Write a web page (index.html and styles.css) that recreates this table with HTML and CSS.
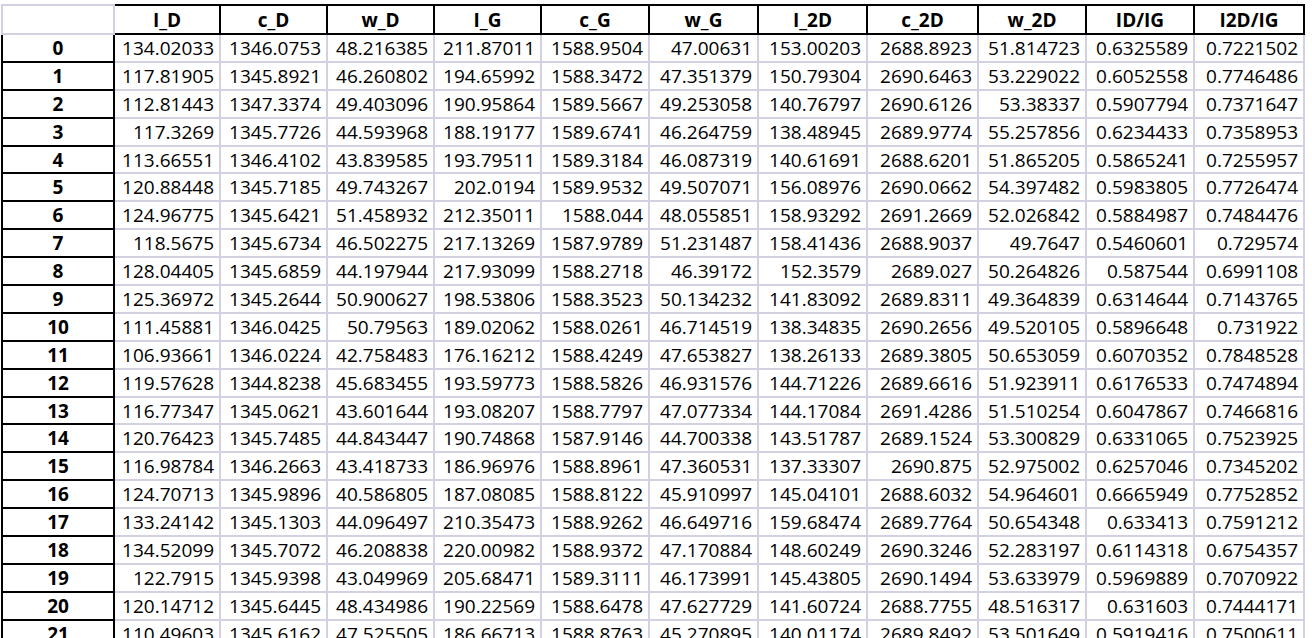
FILE: index.html
```html
<!DOCTYPE html>
<html>
<head>
<meta charset="utf-8">
<title>Data</title>
<link rel="stylesheet" href="styles.css">
</head>
<body>
<div class="sheet">
<table class="grid">
<colgroup>
<col class="c-idx"><col class="c1"><col class="c2"><col class="c3"><col class="c4"><col class="c5"><col class="c6"><col class="c7"><col class="c8"><col class="c9"><col class="c10"><col class="c11">
</colgroup>
<thead>
<tr class="head"><th class="corner"></th><th>I_D</th><th>c_D</th><th>w_D</th><th>I_G</th><th>c_G</th><th>w_G</th><th>I_2D</th><th>c_2D</th><th>w_2D</th><th>ID/IG</th><th>I2D/IG</th></tr>
</thead>
<tbody>
<tr><th class="idx">0</th><td>134.02033</td><td>1346.0753</td><td>48.216385</td><td>211.87011</td><td>1588.9504</td><td>47.00631</td><td>153.00203</td><td>2688.8923</td><td>51.814723</td><td>0.6325589</td><td>0.7221502</td></tr>
<tr><th class="idx">1</th><td>117.81905</td><td>1345.8921</td><td>46.260802</td><td>194.65992</td><td>1588.3472</td><td>47.351379</td><td>150.79304</td><td>2690.6463</td><td>53.229022</td><td>0.6052558</td><td>0.7746486</td></tr>
<tr><th class="idx">2</th><td>112.81443</td><td>1347.3374</td><td>49.403096</td><td>190.95864</td><td>1589.5667</td><td>49.253058</td><td>140.76797</td><td>2690.6126</td><td>53.38337</td><td>0.5907794</td><td>0.7371647</td></tr>
<tr><th class="idx">3</th><td>117.3269</td><td>1345.7726</td><td>44.593968</td><td>188.19177</td><td>1589.6741</td><td>46.264759</td><td>138.48945</td><td>2689.9774</td><td>55.257856</td><td>0.6234433</td><td>0.7358953</td></tr>
<tr><th class="idx">4</th><td>113.66551</td><td>1346.4102</td><td>43.839585</td><td>193.79511</td><td>1589.3184</td><td>46.087319</td><td>140.61691</td><td>2688.6201</td><td>51.865205</td><td>0.5865241</td><td>0.7255957</td></tr>
<tr><th class="idx">5</th><td>120.88448</td><td>1345.7185</td><td>49.743267</td><td>202.0194</td><td>1589.9532</td><td>49.507071</td><td>156.08976</td><td>2690.0662</td><td>54.397482</td><td>0.5983805</td><td>0.7726474</td></tr>
<tr><th class="idx">6</th><td>124.96775</td><td>1345.6421</td><td>51.458932</td><td>212.35011</td><td>1588.044</td><td>48.055851</td><td>158.93292</td><td>2691.2669</td><td>52.026842</td><td>0.5884987</td><td>0.7484476</td></tr>
<tr><th class="idx">7</th><td>118.5675</td><td>1345.6734</td><td>46.502275</td><td>217.13269</td><td>1587.9789</td><td>51.231487</td><td>158.41436</td><td>2688.9037</td><td>49.7647</td><td>0.5460601</td><td>0.729574</td></tr>
<tr><th class="idx">8</th><td>128.04405</td><td>1345.6859</td><td>44.197944</td><td>217.93099</td><td>1588.2718</td><td>46.39172</td><td>152.3579</td><td>2689.027</td><td>50.264826</td><td>0.587544</td><td>0.6991108</td></tr>
<tr><th class="idx">9</th><td>125.36972</td><td>1345.2644</td><td>50.900627</td><td>198.53806</td><td>1588.3523</td><td>50.134232</td><td>141.83092</td><td>2689.8311</td><td>49.364839</td><td>0.6314644</td><td>0.7143765</td></tr>
<tr><th class="idx">10</th><td>111.45881</td><td>1346.0425</td><td>50.79563</td><td>189.02062</td><td>1588.0261</td><td>46.714519</td><td>138.34835</td><td>2690.2656</td><td>49.520105</td><td>0.5896648</td><td>0.731922</td></tr>
<tr><th class="idx">11</th><td>106.93661</td><td>1346.0224</td><td>42.758483</td><td>176.16212</td><td>1588.4249</td><td>47.653827</td><td>138.26133</td><td>2689.3805</td><td>50.653059</td><td>0.6070352</td><td>0.7848528</td></tr>
<tr><th class="idx">12</th><td>119.57628</td><td>1344.8238</td><td>45.683455</td><td>193.59773</td><td>1588.5826</td><td>46.931576</td><td>144.71226</td><td>2689.6616</td><td>51.923911</td><td>0.6176533</td><td>0.7474894</td></tr>
<tr><th class="idx">13</th><td>116.77347</td><td>1345.0621</td><td>43.601644</td><td>193.08207</td><td>1588.7797</td><td>47.077334</td><td>144.17084</td><td>2691.4286</td><td>51.510254</td><td>0.6047867</td><td>0.7466816</td></tr>
<tr><th class="idx">14</th><td>120.76423</td><td>1345.7485</td><td>44.843447</td><td>190.74868</td><td>1587.9146</td><td>44.700338</td><td>143.51787</td><td>2689.1524</td><td>53.300829</td><td>0.6331065</td><td>0.7523925</td></tr>
<tr><th class="idx">15</th><td>116.98784</td><td>1346.2663</td><td>43.418733</td><td>186.96976</td><td>1588.8961</td><td>47.360531</td><td>137.33307</td><td>2690.875</td><td>52.975002</td><td>0.6257046</td><td>0.7345202</td></tr>
<tr><th class="idx">16</th><td>124.70713</td><td>1345.9896</td><td>40.586805</td><td>187.08085</td><td>1588.8122</td><td>45.910997</td><td>145.04101</td><td>2688.6032</td><td>54.964601</td><td>0.6665949</td><td>0.7752852</td></tr>
<tr><th class="idx">17</th><td>133.24142</td><td>1345.1303</td><td>44.096497</td><td>210.35473</td><td>1588.9262</td><td>46.649716</td><td>159.68474</td><td>2689.7764</td><td>50.654348</td><td>0.633413</td><td>0.7591212</td></tr>
<tr><th class="idx">18</th><td>134.52099</td><td>1345.7072</td><td>46.208838</td><td>220.00982</td><td>1588.9372</td><td>47.170884</td><td>148.60249</td><td>2690.3246</td><td>52.283197</td><td>0.6114318</td><td>0.6754357</td></tr>
<tr><th class="idx">19</th><td>122.7915</td><td>1345.9398</td><td>43.049969</td><td>205.68471</td><td>1589.3111</td><td>46.173991</td><td>145.43805</td><td>2690.1494</td><td>53.633979</td><td>0.5969889</td><td>0.7070922</td></tr>
<tr><th class="idx">20</th><td>120.14712</td><td>1345.6445</td><td>48.434986</td><td>190.22569</td><td>1588.6478</td><td>47.627729</td><td>141.60724</td><td>2688.7755</td><td>48.516317</td><td>0.631603</td><td>0.7444171</td></tr>
<tr><th class="idx">21</th><td>110.49603</td><td>1345.6162</td><td>47.525505</td><td>186.66713</td><td>1588.8763</td><td>45.270895</td><td>140.01174</td><td>2689.8492</td><td>53.501649</td><td>0.5919416</td><td>0.7500611</td></tr>
</tbody>
</table>
</div>
</body>
</html>
```
FILE: styles.css
```css
html, body {
  margin: 0;
  padding: 0;
  background: #ffffff;
}

body {
  font-family: "Open Sans", "Noto Sans", "Liberation Sans", sans-serif;
  color: #000000;
  overflow: hidden;
}

.sheet {
  padding: 4px 0 0 1px;
}

.grid {
  border-collapse: collapse;
  table-layout: fixed;
  width: 1303px;
  font-size: 19px;
}

.c-idx { width: 112px; }
.c1 { width: 106px; }
.c2 { width: 107px; }
.c3 { width: 107px; }
.c4 { width: 107px; }
.c5 { width: 108px; }
.c6 { width: 109px; }
.c7 { width: 109px; }
.c8 { width: 111px; }
.c9 { width: 108px; }
.c10 { width: 108px; }
.c11 { width: 110px; }

.grid tr {
  height: 27.9px;
}

.grid tr.head {
  height: 29px;
}

.grid td,
.grid th {
  padding: 0 5px;
  white-space: nowrap;
  overflow: hidden;
  line-height: 24px;
  vertical-align: middle;
}

.grid td {
  border: 2px solid #d3d1e1;
  text-align: right;
  font-weight: normal;
}

.grid th {
  border: 2px solid #000000;
  text-align: center;
  font-weight: 700;
}

.grid th.corner {
  border: 2px solid #d3d1e1;
}
```
